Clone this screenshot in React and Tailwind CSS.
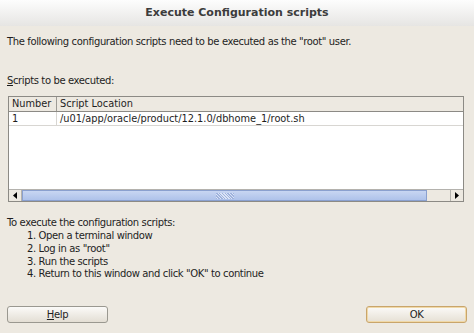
export default function App() {
  const font = { fontFamily: '"DejaVu Sans", sans-serif' };
  return (
    <div className="w-[474px] h-[333px] overflow-hidden bg-[#ede9e1] flex flex-col text-[#1e1e1e]" style={font}>
      <div className="h-[26px] shrink-0 bg-gradient-to-b from-[#fdfdfd] to-[#e6e5e3] flex items-center justify-center">
        <span className="text-[11px] font-bold text-[#3c3c3c]">Execute Configuration scripts</span>
      </div>
      <div className="flex-1 flex flex-col px-[7px] text-[10px] tracking-[-0.38px] leading-[12.7px]">
        <div className="mt-[10px]">The following configuration scripts need to be executed as the "root" user.</div>
        <div className="mt-[26px]"><span className="underline">S</span>cripts to be executed:</div>
        <div className="mt-[9px] mx-[1px] w-[456px] h-[106px] border border-[#8c8a85] bg-white flex flex-col tracking-normal text-[9.8px]">
          <div className="flex h-[15px] bg-[#ede9e1] border-b border-[#8c8a85]">
            <div className="w-[48px] border-r border-[#9e9b95] pl-[3px] flex items-center">Number</div>
            <div className="flex-1 pl-[3px] flex items-center">Script Location</div>
          </div>
          <div className="flex h-[14px] border-b border-[#d8d6d2]">
            <div className="w-[48px] border-r border-[#d8d6d2] pl-[3px] flex items-center">1</div>
            <div className="flex-1 pl-[3px] flex items-center">/u01/app/oracle/product/12.1.0/dbhome_1/root.sh</div>
          </div>
          <div className="flex-1" />
          <div className="h-[12px] flex border-t border-[#b4b2ad] bg-[#ede9e1]">
            <div className="w-[13px] border-r border-[#b4b2ad] flex items-center justify-center">
              <svg width="4" height="7" viewBox="0 0 4 7"><path d="M4 0 L0 3.5 L4 7 Z" fill="#000" /></svg>
            </div>
            <div className="w-[405px] bg-gradient-to-b from-[#c8d6f2] to-[#aec2ea] border border-[#8aa0cf] flex items-center justify-center">
              <div className="w-[18px] h-[6px] bg-[repeating-linear-gradient(45deg,#9fb3dd_0,#9fb3dd_1px,#dbe4f6_1px,#dbe4f6_2px)]" />
            </div>
            <div className="flex-1" />
            <div className="w-[13px] border-l border-[#b4b2ad] flex items-center justify-center">
              <svg width="4" height="7" viewBox="0 0 4 7"><path d="M0 0 L4 3.5 L0 7 Z" fill="#000" /></svg>
            </div>
          </div>
        </div>
        <div className="mt-[15px]">To execute the configuration scripts:</div>
        <ol className="pl-[20px]">
          <li>1. Open a terminal window</li>
          <li>2. Log in as "root"</li>
          <li>3. Run the scripts</li>
          <li>4. Return to this window and click "OK" to continue</li>
        </ol>
        <div className="mt-auto mb-[10px] flex justify-between">
          <button className="w-[101px] h-[17px] rounded-[3px] border border-[#9a9890] bg-gradient-to-b from-[#fbfaf8] to-[#e3ded4] text-[10px] leading-none">
            <span className="underline">H</span>elp
          </button>
          <button className="w-[101px] h-[17px] rounded-[3px] border border-[#c9a56b] bg-gradient-to-b from-[#fbfaf8] to-[#e6e0d4] text-[10px] leading-none shadow-[inset_0_0_0_1px_#f0d9a8]">
            OK
          </button>
        </div>
      </div>
    </div>
  );
}
